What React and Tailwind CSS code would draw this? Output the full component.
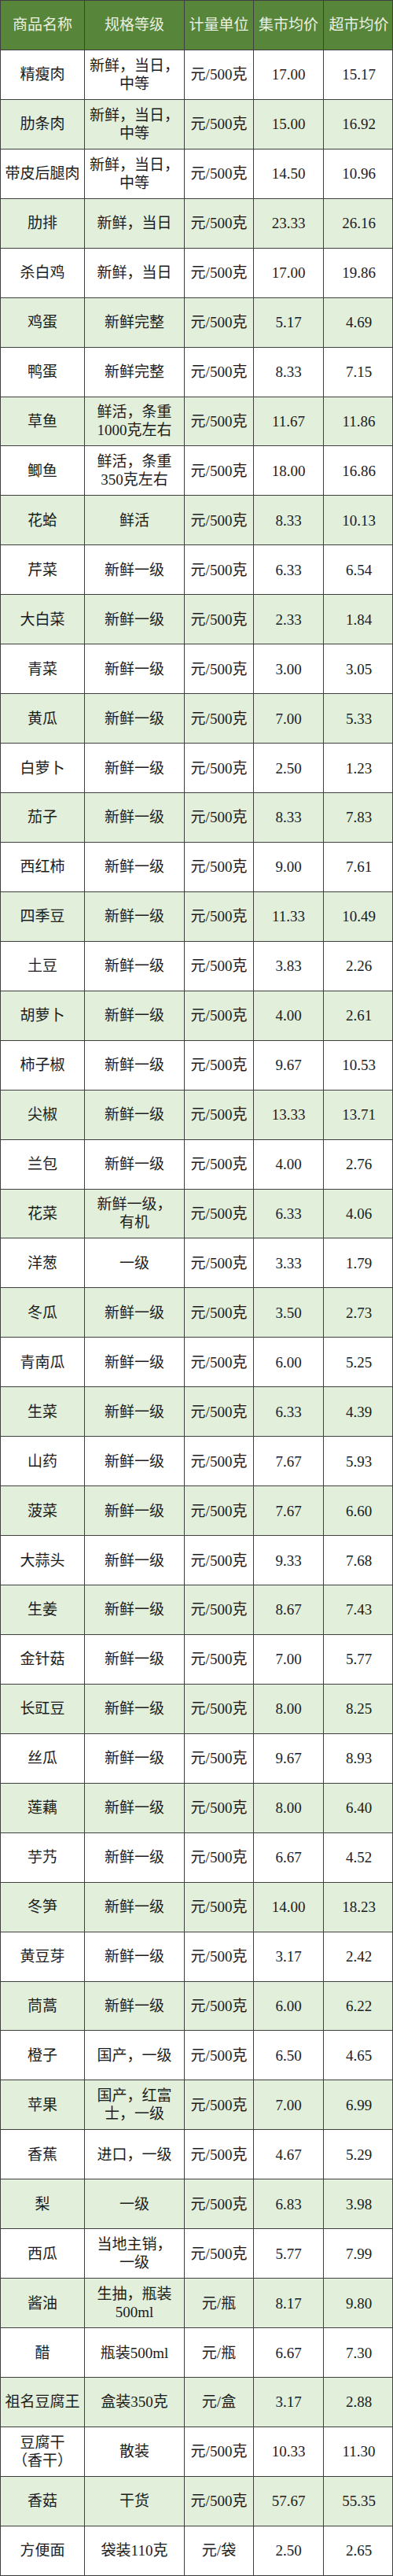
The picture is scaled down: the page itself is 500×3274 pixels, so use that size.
const HEAD = ['商品名称', '规格等级', '计量单位', '集市均价', '超市均价'];

// [名称, 规格(行), 单位, 集市, 超市]
const ROWS = [
  [['精瘦肉'], ['新鲜，当日，', '中等'], '元/500克', '17.00', '15.17'],
  [['肋条肉'], ['新鲜，当日，', '中等'], '元/500克', '15.00', '16.92'],
  [['带皮后腿肉'], ['新鲜，当日，', '中等'], '元/500克', '14.50', '10.96'],
  [['肋排'], ['新鲜，当日'], '元/500克', '23.33', '26.16'],
  [['杀白鸡'], ['新鲜，当日'], '元/500克', '17.00', '19.86'],
  [['鸡蛋'], ['新鲜完整'], '元/500克', '5.17', '4.69'],
  [['鸭蛋'], ['新鲜完整'], '元/500克', '8.33', '7.15'],
  [['草鱼'], ['鲜活，条重', '1000克左右'], '元/500克', '11.67', '11.86'],
  [['鲫鱼'], ['鲜活，条重', '350克左右'], '元/500克', '18.00', '16.86'],
  [['花蛤'], ['鲜活'], '元/500克', '8.33', '10.13'],
  [['芹菜'], ['新鲜一级'], '元/500克', '6.33', '6.54'],
  [['大白菜'], ['新鲜一级'], '元/500克', '2.33', '1.84'],
  [['青菜'], ['新鲜一级'], '元/500克', '3.00', '3.05'],
  [['黄瓜'], ['新鲜一级'], '元/500克', '7.00', '5.33'],
  [['白萝卜'], ['新鲜一级'], '元/500克', '2.50', '1.23'],
  [['茄子'], ['新鲜一级'], '元/500克', '8.33', '7.83'],
  [['西红柿'], ['新鲜一级'], '元/500克', '9.00', '7.61'],
  [['四季豆'], ['新鲜一级'], '元/500克', '11.33', '10.49'],
  [['土豆'], ['新鲜一级'], '元/500克', '3.83', '2.26'],
  [['胡萝卜'], ['新鲜一级'], '元/500克', '4.00', '2.61'],
  [['柿子椒'], ['新鲜一级'], '元/500克', '9.67', '10.53'],
  [['尖椒'], ['新鲜一级'], '元/500克', '13.33', '13.71'],
  [['兰包'], ['新鲜一级'], '元/500克', '4.00', '2.76'],
  [['花菜'], ['新鲜一级，', '有机'], '元/500克', '6.33', '4.06'],
  [['洋葱'], ['一级'], '元/500克', '3.33', '1.79'],
  [['冬瓜'], ['新鲜一级'], '元/500克', '3.50', '2.73'],
  [['青南瓜'], ['新鲜一级'], '元/500克', '6.00', '5.25'],
  [['生菜'], ['新鲜一级'], '元/500克', '6.33', '4.39'],
  [['山药'], ['新鲜一级'], '元/500克', '7.67', '5.93'],
  [['菠菜'], ['新鲜一级'], '元/500克', '7.67', '6.60'],
  [['大蒜头'], ['新鲜一级'], '元/500克', '9.33', '7.68'],
  [['生姜'], ['新鲜一级'], '元/500克', '8.67', '7.43'],
  [['金针菇'], ['新鲜一级'], '元/500克', '7.00', '5.77'],
  [['长豇豆'], ['新鲜一级'], '元/500克', '8.00', '8.25'],
  [['丝瓜'], ['新鲜一级'], '元/500克', '9.67', '8.93'],
  [['莲藕'], ['新鲜一级'], '元/500克', '8.00', '6.40'],
  [['芋艿'], ['新鲜一级'], '元/500克', '6.67', '4.52'],
  [['冬笋'], ['新鲜一级'], '元/500克', '14.00', '18.23'],
  [['黄豆芽'], ['新鲜一级'], '元/500克', '3.17', '2.42'],
  [['茼蒿'], ['新鲜一级'], '元/500克', '6.00', '6.22'],
  [['橙子'], ['国产，一级'], '元/500克', '6.50', '4.65'],
  [['苹果'], ['国产，红富', '士，一级'], '元/500克', '7.00', '6.99'],
  [['香蕉'], ['进口，一级'], '元/500克', '4.67', '5.29'],
  [['梨'], ['一级'], '元/500克', '6.83', '3.98'],
  [['西瓜'], ['当地主销，', '一级'], '元/500克', '5.77', '7.99'],
  [['酱油'], ['生抽，瓶装', '500ml'], '元/瓶', '8.17', '9.80'],
  [['醋'], ['瓶装500ml'], '元/瓶', '6.67', '7.30'],
  [['祖名豆腐王'], ['盒装350克'], '元/盒', '3.17', '2.88'],
  [['豆腐干', '（香干）'], ['散装'], '元/500克', '10.33', '11.30'],
  [['香菇'], ['干货'], '元/500克', '57.67', '55.35'],
  [['方便面'], ['袋装110克'], '元/袋', '2.50', '2.65'],
];

const COLS = 'grid grid-cols-[107px_127px_88px_89px_89px]';

function Cell({ lines, last }) {
  return (
    <div className={`flex flex-col items-center justify-center text-center leading-[23px] ${last ? '' : 'border-r border-[#3f3f3f]'}`}>
      {lines.map((l, i) => <span key={i} className="whitespace-nowrap">{l}</span>)}
    </div>
  );
}

export default function App() {
  return (
    <div
      className="w-[500px] h-[3274px] flex flex-col border border-[#3f3f3f] text-[19px] text-[#1c1c1c] bg-white"
      style={{ fontFamily: '"Liberation Serif", "Noto Sans CJK SC", serif' }}
    >
      {/* 表头 */}
      <div className={`${COLS} flex-1 bg-[#578539] text-[#eaf1e2] border-b border-[#3f3f3f]`}>
        {HEAD.map((h, i) => <Cell key={h} lines={[h]} last={i === HEAD.length - 1} />)}
      </div>

      {ROWS.map((r, idx) => (
        <div
          key={idx}
          className={`${COLS} flex-1 ${idx % 2 ? 'bg-[#e2efda]' : 'bg-white'} ${idx === ROWS.length - 1 ? '' : 'border-b border-[#3f3f3f]'}`}
        >
          <Cell lines={r[0]} />
          <Cell lines={r[1]} />
          <Cell lines={[r[2]]} />
          <Cell lines={[r[3]]} />
          <Cell lines={[r[4]]} last />
        </div>
      ))}
    </div>
  );
}
